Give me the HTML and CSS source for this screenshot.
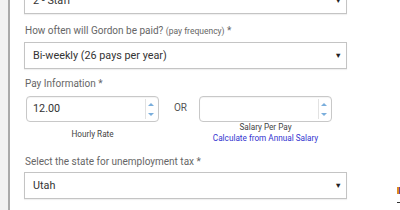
FILE: index.html
```html
<!DOCTYPE html>
<html>
<head>
<meta charset="utf-8">
<link rel="stylesheet" href="styles.css">
</head>
<body>
<div class="page">
  <div class="sidebar"></div>
  <div class="main">
    <div class="select first"><span class="val">2 - Staff</span><span class="arrow">▼</span></div>

    <div class="label">How often will Gordon be paid? <span class="small">(pay frequency)</span> *</div>
    <div class="select"><span class="val">Bi-weekly (26 pays per year)</span><span class="arrow">▼</span></div>

    <div class="label pay">Pay Information *</div>
    <div class="payrow">
      <div class="col">
        <div class="num"><span class="numval">12.00</span><span class="spin"><i class="up"></i><i class="down"></i></span></div>
        <div class="cap hourly">Hourly Rate</div>
      </div>
      <div class="or">OR</div>
      <div class="col">
        <div class="num"><span class="numval"></span><span class="spin"><i class="up"></i><i class="down"></i></span></div>
        <div class="cap salary">Salary Per Pay</div>
        <a class="link">Calculate from Annual Salary</a>
      </div>
    </div>

    <div class="label state">Select the state for unemployment tax *</div>
    <div class="select"><span class="val">Utah</span><span class="arrow">▼</span></div>
  </div>
  <div class="side"><span class="mark"></span><span class="dash"></span></div>
</div>
</body>
</html>
```

FILE: styles.css
```css
html, body {
  margin: 0;
  padding: 0;
  background: #fff;
}
body {
  font-family: Roboto, "Liberation Sans", Arial, sans-serif;
  width: 400px;
  height: 210px;
  overflow: hidden;
}
.page {
  display: flex;
  height: 210px;
}
.sidebar {
  width: 8px;
  background: #f1f1f1;
  border-right: 2px solid #a9a9a9;
  flex: none;
}
.main {
  padding-left: 14px;
  width: 323px;
  flex: none;
}
.select {
  box-sizing: border-box;
  height: 27px;
  border: 1px solid #c4c4c4;
  box-shadow: 0 1px 1px rgba(0,0,0,0.06);
  display: flex;
  align-items: center;
  justify-content: space-between;
  padding: 0 4px 0 8px;
  color: #333;
  font-size: 10.8px;
}
.select.first {
  margin-top: -13px;
}
.arrow {
  font-size: 7.5px;
  color: #222;
}
.label {
  color: #666;
  font-size: 10px;
  line-height: 14px;
  margin: 10px 0 4px 1px;
}
.label .small {
  font-size: 8.5px;
}
.label.pay {
  margin-top: 8px;
  margin-bottom: 5px;
}
.payrow {
  display: flex;
  align-items: flex-start;
  margin-left: 2px;
}
.col {
  width: 133px;
  display: flex;
  flex-direction: column;
  align-items: center;
}
.num {
  box-sizing: border-box;
  width: 133px;
  height: 26px;
  border: 1px solid #c8c8c8;
  border-radius: 4px;
  box-shadow: inset 0 1px 1px rgba(0,0,0,0.05);
  display: flex;
  align-items: stretch;
}
.numval {
  flex: 1;
  font-size: 10.8px;
  color: #333;
  padding-left: 6px;
  line-height: 24px;
}
.spin {
  width: 10px;
  border-left: 1px solid #e2e2e2;
  display: flex;
  flex-direction: column;
  justify-content: center;
  align-items: center;
  gap: 7px;
  margin: 2px 2px 2px 0;
}
.spin i {
  width: 0;
  height: 0;
  border-left: 3px solid transparent;
  border-right: 3px solid transparent;
}
.spin .up {
  border-bottom: 3px solid #7aaedc;
}
.spin .down {
  border-top: 3px solid #7aaedc;
}
.or {
  width: 40px;
  text-align: center;
  font-size: 10px;
  color: #555;
  line-height: 24px;
  padding-left: 3px;
  box-sizing: border-box;
}
.cap {
  font-size: 8.2px;
  color: #444;
}
.cap.hourly {
  margin-top: 6px;
  line-height: 12px;
}
.cap.salary {
  margin-top: 0;
  line-height: 11px;
}
.link {
  font-size: 8.2px;
  line-height: 11px;
  color: #3434d0;
}
.label.state {
  margin-top: 11px;
  margin-bottom: 3px;
}
.side {
  padding-left: 50px;
  padding-top: 187px;
  display: flex;
  flex-direction: column;
  gap: 8px;
}
.mark {
  display: block;
  width: 3px;
  height: 7px;
  background: linear-gradient(90deg, #e08a1e 0 2px, #6a3fa0 2px);
}
.dash {
  display: block;
  width: 3px;
  height: 1px;
  background: #333;
}
```
